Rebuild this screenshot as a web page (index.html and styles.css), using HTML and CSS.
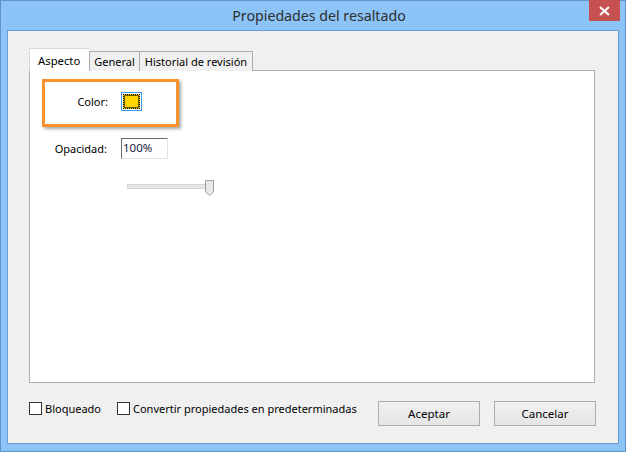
FILE: index.html
```html
<!DOCTYPE html>
<html lang="es">
<head>
<meta charset="utf-8">
<title>Propiedades del resaltado</title>
<link rel="stylesheet" href="styles.css">
</head>
<body>
<div class="window">
  <div class="titlebar">
    <div class="title">Propiedades del resaltado</div>
    <div class="close"><svg width="11" height="10" viewBox="0 0 11 10"><path d="M1 1 L10 9 M10 1 L1 9" stroke="#fff" stroke-width="2.2" fill="none"/></svg></div>
  </div>
  <div class="client">
    <div class="tabs">
      <div class="tab active">Aspecto</div>
      <div class="tab">General</div>
      <div class="tab">Historial de revisión</div>
    </div>
    <div class="panel">
      <div class="highlight"></div>
      <div class="form">
        <div class="label label-color">Color:</div>
        <div class="swatch"><div class="swatch-dots"><div class="swatch-fill"></div></div></div>
        <div class="label label-op">Opacidad:</div>
        <div class="input">100%</div>
        <div class="slider">
          <div class="track"></div>
          <svg class="thumb" width="10" height="16" viewBox="0 0 10 16"><path d="M0.5 0.5 H8.5 V12 L4.5 15.5 L0.5 12 Z" fill="#e9e9e9" stroke="#a0a0a0"/></svg>
        </div>
      </div>
    </div>
    <div class="footer">
      <label class="check"><span class="box"></span>Bloqueado</label>
      <label class="check check2"><span class="box"></span>Convertir propiedades en predeterminadas</label>
      <div class="buttons">
        <div class="btn">Aceptar</div>
        <div class="btn">Cancelar</div>
      </div>
    </div>
  </div>
</div>
</body>
</html>
```
FILE: styles.css
```css
* { box-sizing: border-box; }
html, body { margin: 0; padding: 0; }
body {
  width: 626px;
  height: 452px;
  font-family: "Noto Sans", "Open Sans", sans-serif;
  font-size: 11px;
  color: #000;
  white-space: nowrap;
}
.window {
  width: 626px;
  height: 452px;
  border: 1px solid #5f93cc;
  background: #8cc4f7;
  display: flex;
  flex-direction: column;
}
.titlebar {
  height: 29px;
  flex-shrink: 0;
  display: flex;
  align-items: flex-start;
}
.title {
  flex: 1;
  text-align: center;
  padding-left: 48px;
  padding-top: 5px;
  font-size: 14.2px;
  color: #2e2e2e;
  line-height: 20px;
}
.close {
  width: 31px;
  height: 21px;
  margin-top: -1px;
  margin-right: 5px;
  background: #c75050;
  display: flex;
  align-items: center;
  justify-content: center;
}
.client {
  flex: 1;
  margin: 0 6px 7px 6px;
  border: 1px solid #6a9dd2;
  background: #f0f0f0;
  padding: 17px 22px 17px 21px;
  display: flex;
  flex-direction: column;
}
.tabs {
  display: flex;
  flex-shrink: 0;
  align-items: flex-end;
  height: 23px;
  position: relative;
  z-index: 1;
  margin-bottom: -1px;
}
.tab {
  height: 20px;
  padding: 0 4px 0 4px;
  border: 1px solid #acacac;
  border-bottom: none;
  background: #f0f0f0;
  line-height: 19px;
}
.tab.active {
  height: 23px;
  padding: 3px 9px 0 8px;
  background: #fff;
  border-color: #d9d9d9;
  border-right: none;
  line-height: 18px;
  font-size: 11.3px;
}
.tab:nth-child(3) { border-left: none; padding-left: 5px; padding-right: 5px; }
.panel {
  height: 313px;
  flex-shrink: 0;
  border: 1px solid #adadad;
  background: #fff;
  position: relative;
  margin-right: 1px;
}
.highlight {
  position: absolute;
  left: 12px;
  top: 8px;
  width: 137px;
  height: 48px;
  border: 3px solid #f7922e;
  box-shadow: 2px 2px 3px rgba(0,0,0,0.35);
}
.form {
  display: grid;
  grid-template-columns: 78px auto;
  column-gap: 13px;
  justify-content: start;
  align-items: center;
}
.label { text-align: right; }
.label-color { grid-row: 1; margin-top: 21px; }
.swatch {
  grid-row: 1;
  margin-top: 21px;
  width: 21px;
  height: 19px;
  border: 1px solid #3d9bf4;
  padding: 1px;
  background: #fff;
}
.swatch-dots {
  width: 100%;
  height: 100%;
  border: 1px dotted #000;
  background: #ffd600;
  box-shadow: inset 0 0 0 1px #6b5a00;
}
.label-op { grid-row: 2; margin-top: 27px; margin-right: 1px; }
.input {
  grid-row: 2;
  margin-top: 27px;
  width: 47px;
  height: 21px;
  border: 1px solid #e2e2e2;
  border-top-color: #6b6b6b;
  border-left-color: #6b6b6b;
  padding-left: 1px;
  line-height: 17px;
  font-size: 11.5px;
  color: #1a1a40;
}
.slider {
  grid-row: 3;
  grid-column: 2;
  margin-top: 21px;
  margin-left: 6px;
  display: flex;
  align-items: flex-start;
  height: 16px;
}
.track {
  width: 80px;
  height: 5px;
  margin-top: 4px;
  background: #e7e7e7;
  border: 1px solid #d6d6d6;
}
.thumb { margin-left: -2px; display: block; }
.footer {
  display: flex;
  flex-shrink: 0;
  align-items: flex-start;
  margin-top: 18px;
}
.check {
  display: flex;
  align-items: center;
  margin-top: 1px;
  line-height: 13px;
  font-size: 11px;
}
.check2 { margin-left: 16px; }
.box {
  width: 13px;
  height: 13px;
  border: 1px solid #333;
  background: #fff;
  margin-right: 3px;
}
.buttons {
  margin-left: auto;
  display: flex;
  gap: 14px;
}
.btn {
  width: 102px;
  height: 25px;
  border: 1px solid #acacac;
  background: linear-gradient(#f0f0f0, #e5e5e5);
  text-align: center;
  line-height: 23px;
  font-size: 11.5px;
}
```
